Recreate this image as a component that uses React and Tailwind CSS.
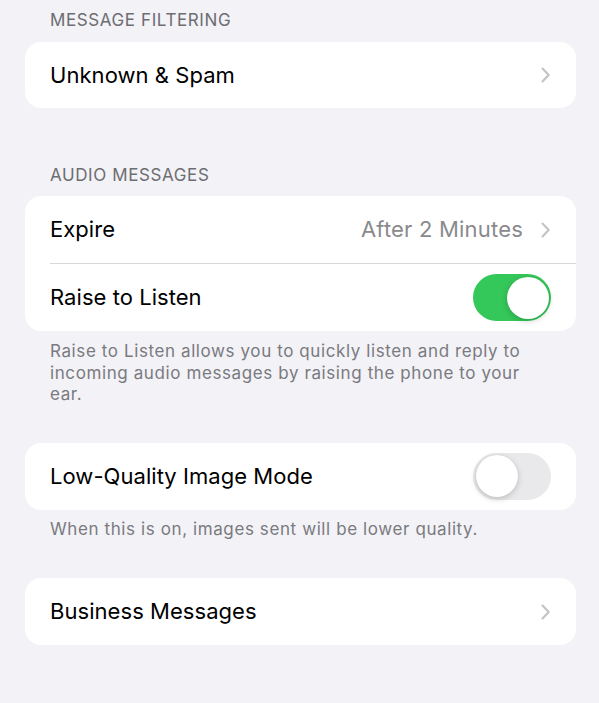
import React from "react";

const font = { fontFamily: "Inter, 'Noto Sans', 'Liberation Sans', sans-serif" };

function Chevron() {
  return (
    <svg width="11" height="16" viewBox="0 0 11 16" fill="none" className="shrink-0">
      <path d="M2.5 1.6 L8.7 8 L2.5 14.4" stroke="#c4c4c7" strokeWidth="2.2" strokeLinecap="round" strokeLinejoin="round" />
    </svg>
  );
}

function Toggle({ on }) {
  return (
    <div
      className={`relative w-[78px] h-[47px] rounded-full shrink-0 ${on ? "bg-[#34c759]" : "bg-[#e9e9eb]"}`}
    >
      <div
        className={`absolute top-[2.5px] w-[42px] h-[42px] rounded-full bg-white shadow-[0_2px_6px_rgba(0,0,0,0.18),0_0_1px_rgba(0,0,0,0.12)] ${on ? "right-[2.5px]" : "left-[2.5px]"}`}
      />
    </div>
  );
}

function Header({ children, className = "" }) {
  return (
    <div className={`pl-[25px] text-[17px] leading-[20px] text-[#6d6d72] tracking-[0.6px] ${className}`}>
      {children}
    </div>
  );
}

function Footer({ children, className = "" }) {
  return (
    <div className={`pl-[25px] pr-[25px] text-[17px] leading-[21.5px] text-[#7a7a7f] tracking-[0.6px] ${className}`}>
      {children}
    </div>
  );
}

function Row({ label, value, chevron, toggle, h = "h-[67px]" }) {
  return (
    <div className={`${h} flex items-center pl-[25px] pr-[25px]`}>
      <span className="flex-1 text-[22px] text-black tracking-[0.05px]">{label}</span>
      {value && <span className="text-[22px] text-[#8a8a8e] mr-[17px] tracking-[0.2px]">{value}</span>}
      {chevron && <Chevron />}
      {toggle !== undefined && <Toggle on={toggle} />}
    </div>
  );
}

function Card({ children, className = "" }) {
  return <div className={`bg-white rounded-[16px] overflow-hidden ${className}`}>{children}</div>;
}

export default function App() {
  return (
    <div className="min-h-[703px] w-[599px] bg-[#f2f2f7] pl-[25px] pr-[23px] pt-[10px]" style={font}>
      <Header className="mb-[12px]">MESSAGE FILTERING</Header>
      <Card>
        <Row label="Unknown & Spam" chevron h="h-[66px]" />
      </Card>

      <Header className="mt-[57px] mb-[11px]">AUDIO MESSAGES</Header>
      <Card>
        <Row label="Expire" value="After 2 Minutes" chevron />
        <div className="ml-[25px] h-px bg-[#d8d8dc]" />
        <Row label="Raise to Listen" toggle={true} />
      </Card>
      <Footer className="mt-[10px]">
        Raise to Listen allows you to quickly listen and reply to incoming audio messages by raising the phone to your ear.
      </Footer>

      <Card className="mt-[37px]">
        <Row label="Low-Quality Image Mode" toggle={false} />
      </Card>
      <Footer className="mt-[9px]">When this is on, images sent will be lower quality.</Footer>

      <Card className="mt-[38px]">
        <Row label="Business Messages" chevron />
      </Card>
    </div>
  );
}
